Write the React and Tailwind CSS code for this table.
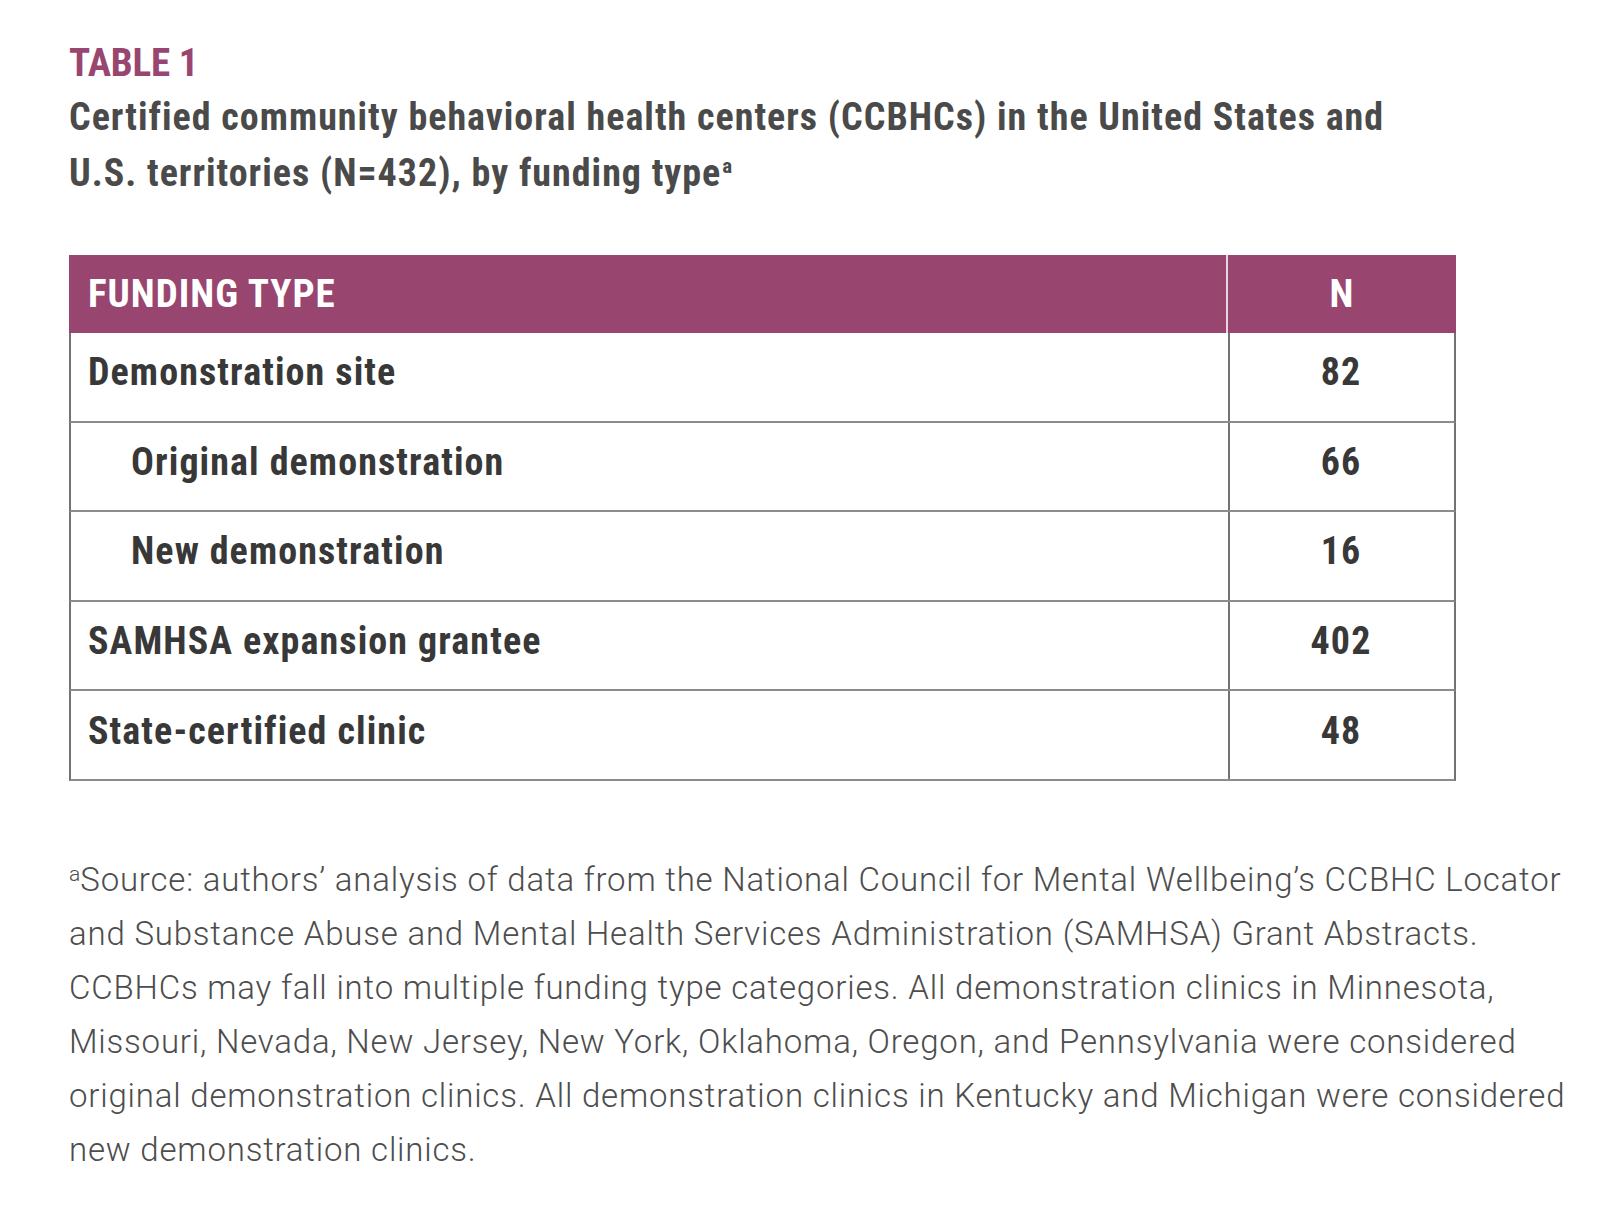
import React from 'react';

const rows = [
  { label: 'Demonstration site', n: '82', indent: false },
  { label: 'Original demonstration', n: '66', indent: true },
  { label: 'New demonstration', n: '16', indent: true },
  { label: 'SAMHSA expansion grantee', n: '402', indent: false },
  { label: 'State-certified clinic', n: '48', indent: false },
];

const cond = "font-['Roboto_Condensed','Liberation_Sans_Narrow',Roboto,sans-serif]";

export default function App() {
  return (
    <div className="min-h-screen bg-white pl-[69px] pt-[41px]">
      {/* Caption */}
      <div className={`${cond} font-bold`}>
        <p className="text-[39px] leading-[44px] text-[#98466f] tracking-[-0.2px]">TABLE 1</p>
        <h1 className="mt-[4px] text-[38px] leading-[56px] text-[#4a4a4a] tracking-[1px]">
          Certified community behavioral health centers (CCBHCs) in the United States and
          <br />
          U.S. territories (N=432), by funding type
          <sup className="text-[21px] leading-none relative -top-[13px] ml-[1px]">a</sup>
        </h1>
      </div>

      {/* Table */}
      <div className={`${cond} font-bold mt-[54px] w-[1387px]`}>
        <div className="grid grid-cols-[1159px_1fr] h-[78px] bg-[#98466f] text-white text-[39px] tracking-[1px]">
          <div className="flex items-center pl-[19px] border-r-2 border-[#e6d5de]">FUNDING TYPE</div>
          <div className="flex items-center justify-center">N</div>
        </div>
        {rows.map((r) => (
          <div
            key={r.label}
            className="grid grid-cols-[1159px_1fr] h-[89.6px] border-x-2 border-x-[#737373] border-b-2 border-b-[#8c8c8c] text-[38px] text-[#383838] tracking-[1.1px]"
          >
            <div className={`flex items-center pb-[8px] border-r-2 border-[#737373] ${r.indent ? 'pl-[60px]' : 'pl-[17px]'}`}>
              {r.label}
            </div>
            <div className="flex items-center justify-center pb-[8px] pr-[2px]">{r.n}</div>
          </div>
        ))}
      </div>

      {/* Footnote */}
      <p className="mt-[72px] font-['Roboto',sans-serif] font-light text-[33px] leading-[54px] text-[#4d4d4d] tracking-[0.8px] whitespace-nowrap">
        <sup className="text-[21px] leading-none relative -top-[10px] tracking-normal">a</sup>
        Source: authors’ analysis of data from the National Council for Mental Wellbeing’s CCBHC Locator
        <br />
        and Substance Abuse and Mental Health Services Administration (SAMHSA) Grant Abstracts.
        <br />
        CCBHCs may fall into multiple funding type categories. All demonstration clinics in Minnesota,
        <br />
        Missouri, Nevada, New Jersey, New York, Oklahoma, Oregon, and Pennsylvania were considered
        <br />
        original demonstration clinics. All demonstration clinics in Kentucky and Michigan were considered
        <br />
        new demonstration clinics.
      </p>
    </div>
  );
}
